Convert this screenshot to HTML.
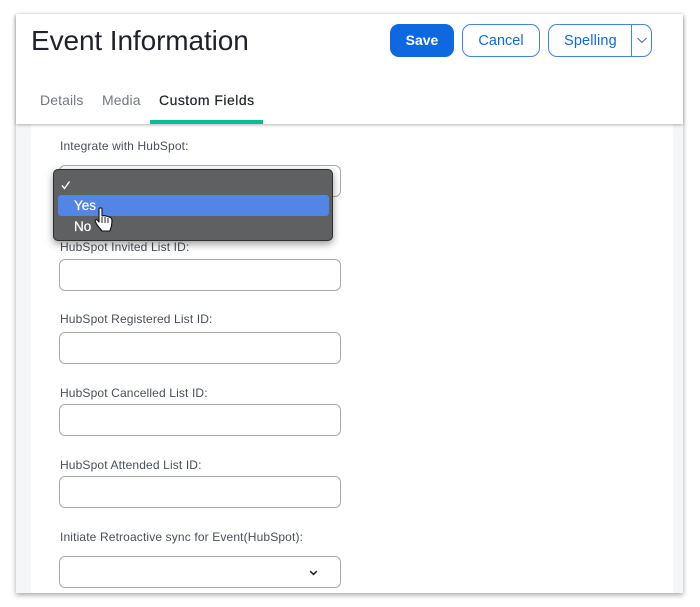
<!DOCTYPE html>
<html>
<head>
<meta charset="utf-8">
<style>
html,body{margin:0;padding:0;background:#fff;}
body{width:700px;height:607px;position:relative;overflow:hidden;font-family:"Liberation Sans",sans-serif;}
.card{position:absolute;left:16px;top:14px;width:667px;height:579px;background:#f5f6f8;box-shadow:0 2px 5px rgba(0,0,0,.35);}
.content{position:absolute;left:31px;top:124px;width:642px;height:469px;background:#fff;}
.header{position:absolute;left:16px;top:14px;width:667px;height:110px;background:#fff;box-shadow:0 1px 3px rgba(0,0,0,.3);}
.abs{position:absolute;white-space:nowrap;}
.title{left:31px;top:24px;font-size:28px;line-height:34px;color:#1f2329;letter-spacing:-.1px;}
.btn{position:absolute;top:24px;height:33px;box-sizing:border-box;border:1px solid #3f86e8;border-radius:9px;background:#fff;color:#0e68df;font-size:14.5px;line-height:31px;text-align:center;}
.bt2{padding-top:1px;}
.tab{top:91px;font-size:14px;line-height:18px;color:#747880;letter-spacing:.1px;}
.ul{position:absolute;left:150px;top:120px;width:113px;height:4px;background:#00c08f;}
.lb{left:60px;font-size:12px;line-height:14px;color:#4a4f57;letter-spacing:.14px;}
.in{position:absolute;left:59px;width:282px;height:32px;box-sizing:border-box;border:1px solid #a6a9ae;border-radius:6px;background:#fff;}
.menu{position:absolute;left:53px;top:169px;width:280px;height:72px;box-sizing:border-box;background:#5f6062;border:1px solid #2e2f31;border-radius:5px;box-shadow:0 3px 8px rgba(0,0,0,.4);}
.sel{position:absolute;left:4px;top:25px;width:271px;height:21px;background:#5285e6;border-radius:3px;}
.mt{left:74px;font-size:13.5px;line-height:16px;color:#fff;-webkit-text-stroke:.2px #fff;}
</style>
</head>
<body>
<div class="card"></div>
<div class="content"></div>
<div class="header"></div>
<div class="abs title">Event Information</div>
<div class="btn" style="left:390px;width:64px;background:#0e68df;border-color:#0e68df;color:#fff;font-weight:bold;font-size:14px;">Save</div>
<div class="btn bt2" style="left:462px;width:78px;">Cancel</div>
<div class="btn bt2" style="left:548px;width:104px;text-align:left;padding-left:15px;letter-spacing:.15px;">Spelling</div>
<div style="position:absolute;left:631px;top:24px;width:1px;height:33px;background:#3f86e8;"></div>
<svg style="position:absolute;left:636px;top:36px;" width="12" height="9" viewBox="0 0 12 9"><path d="M1.5 2 L6 6.5 L10.5 2" fill="none" stroke="#4a6f9f" stroke-width="1.1"/></svg>
<div class="abs tab" style="left:40px;">Details</div>
<div class="abs tab" style="left:102px;">Media</div>
<div class="abs tab" style="left:159px;color:#1f2329;letter-spacing:.47px;-webkit-text-stroke:.2px #1f2329;">Custom Fields</div>
<div class="ul"></div>

<div class="abs lb" style="top:139px;">Integrate with HubSpot:</div>
<div class="in" style="top:165px;"></div>
<div class="abs lb" style="top:240px;">HubSpot Invited List ID:</div>
<div class="in" style="top:259px;"></div>
<div class="abs lb" style="top:312px;">HubSpot Registered List ID:</div>
<div class="in" style="top:332px;"></div>
<div class="abs lb" style="top:386px;">HubSpot Cancelled List ID:</div>
<div class="in" style="top:404px;"></div>
<div class="abs lb" style="top:458px;">HubSpot Attended List ID:</div>
<div class="in" style="top:476px;"></div>
<div class="abs lb" style="top:530px;">Initiate Retroactive sync for Event(HubSpot):</div>
<div class="in" style="top:556px;"></div>
<svg style="position:absolute;left:309px;top:570px;" width="9" height="6" viewBox="0 0 9 6"><path d="M1.2 1.2 L4.5 4.4 L7.8 1.2" fill="none" stroke="#1f2329" stroke-width="1.5"/></svg>

<div class="menu"><div class="sel"></div></div>
<svg style="position:absolute;left:60px;top:179px;" width="12" height="12" viewBox="0 0 12 12"><path d="M2 6.5 L4.5 9.5 L9.5 2.5" fill="none" stroke="#fff" stroke-width="1.4"/></svg>
<div class="abs mt" style="top:198px;">Yes</div>
<div class="abs mt" style="top:219px;">No</div>
<svg style="position:absolute;left:94px;top:207px;" width="20" height="27" viewBox="0 0 20 27">
<path d="M5 2 C5 .6 8 .6 8 2 L8 9 L10 8.6 L13 9.2 L16 10.2 C17.6 10.8 18 12 18 14 L17.5 19 L15.8 24 L8 24 L3.5 18.5 L1.2 14.5 C.8 13 2.4 12.2 3.4 13.2 L5 15 Z" fill="#fff" stroke="#111" stroke-width="1.1" stroke-linejoin="round"/>
<path d="M8 10 V16 M11 10 V16 M14 11 V16" fill="none" stroke="#111" stroke-width=".9"/>
</svg>
</body>
</html>
